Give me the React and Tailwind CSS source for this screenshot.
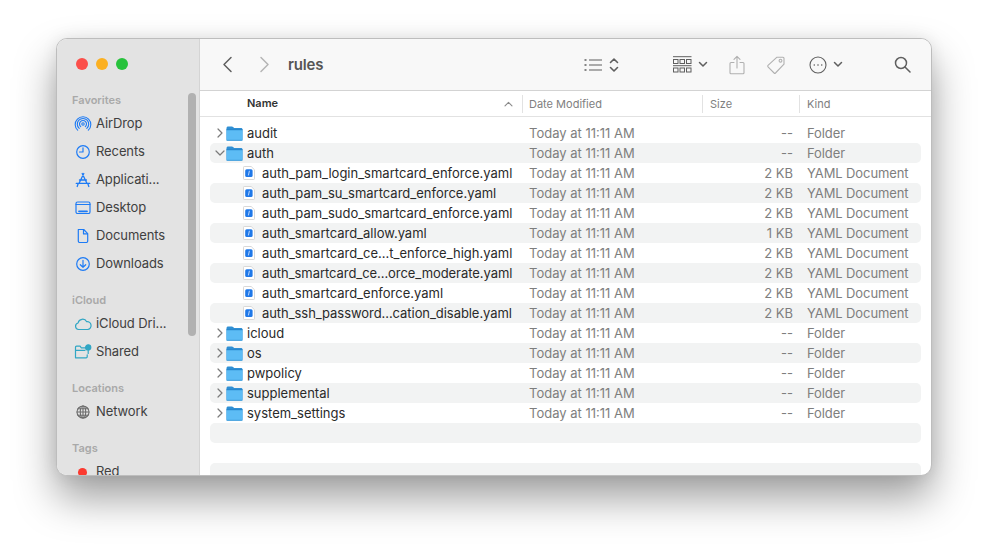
import React from "react";

const folderRows = (names) => names.map((n) => ({ name: n, type: "folder" }));
const rows = [
  { name: "audit", type: "folder" },
  { name: "auth", type: "folder", open: true },
  { name: "auth_pam_login_smartcard_enforce.yaml", size: "2 KB" },
  { name: "auth_pam_su_smartcard_enforce.yaml", size: "2 KB" },
  { name: "auth_pam_sudo_smartcard_enforce.yaml", size: "2 KB" },
  { name: "auth_smartcard_allow.yaml", size: "1 KB" },
  { name: "auth_smartcard_ce...t_enforce_high.yaml", size: "2 KB" },
  { name: "auth_smartcard_ce...orce_moderate.yaml", size: "2 KB", tight: true },
  { name: "auth_smartcard_enforce.yaml", size: "2 KB" },
  { name: "auth_ssh_password...cation_disable.yaml", size: "2 KB", tight: true },
  ...folderRows(["icloud", "os", "pwpolicy", "supplemental", "system_settings"]),
];

function S({ w = 18, h = 18, vb = "0 0 18 18", c = "#1d7bf5", sw = 1.2, children, className = "" }) {
  return (
    <svg width={w} height={h} viewBox={vb} fill="none" stroke={c} strokeWidth={sw} strokeLinecap="round" strokeLinejoin="round" className={className}>
      {children}
    </svg>
  );
}

const icons = {
  airdrop: (
    <S sw={1.1}>
      <circle cx="9" cy="9" r="1.2" />
      <path d="M6.7 11.6a3.5 3.5 0 1 1 4.600 0M5.200 13.400a5.700 5.700 0 1 1 7.600 0M3.700 15.200a7.800 7.800 0 1 1 10.600 0" />
    </S>
  ),
  recents: (
    <S>
      <circle cx="9" cy="9" r="6.3" />
      <path d="M9 4.800V9H5.500" />
    </S>
  ),
  apps: (
    <S sw={1.3}>
      <path d="M9.800 2.500 5.200 12M8.200 2.500 12.800 12M2.200 12.300h13.600M5.500 9h7M4.200 12.500l-1 3M13.800 12.500l1 3" />
    </S>
  ),
  desktop: (
    <S>
      <rect x="2" y="3" width="14" height="11.500" rx="1.600" />
      <path d="M2 5.500h14" />
      <path d="M5 12.300h8" strokeWidth="1.800" />
    </S>
  ),
  docs: (
    <S>
      <path d="M4.300 2.500h5.400l4 4.200v7.300a1.500 1.500 0 0 1-1.500 1.500H5.800A1.500 1.500 0 0 1 4.300 14z" />
      <path d="M9.500 2.700v4.200h4" />
    </S>
  ),
  downloads: (
    <S>
      <circle cx="9" cy="9" r="6.300" />
      <path d="M9 5.300v7M6.300 9.700 9 12.300l2.700-2.600" />
    </S>
  ),
  cloud: (
    <S c="#31a6c4">
      <path d="M4.600 14.500a3.300 3.300 0 0 1-.5-6.500 4.600 4.600 0 0 1 8.600-1.300 3.900 3.900 0 0 1 .9 7.800z" />
    </S>
  ),
  shared: (
    <S c="#31a6c4">
      <path d="M1.500 14.800V4.200a1 1 0 0 1 1-1h3.600l1.200 1.600h4M1.500 7.300h9.500M1.500 14.800h10.700a1 1 0 0 0 1-1v-2" />
      <circle cx="14.200" cy="4.400" r="2.600" fill="#31a6c4" />
      <path d="M14.200 7v3.500" />
    </S>
  ),
  network: (
    <S c="#6c6c6c" sw={1.1}>
      <circle cx="9" cy="9" r="6" />
      <ellipse cx="9" cy="9" rx="2.700" ry="6" />
      <path d="M3 9h12M4 5.800h10M4 12.200h10M9 3v12" />
    </S>
  ),
};

function Heading({ children, className = "" }) {
  return <div className={`h-4 pl-[15px] text-[11px] leading-4 font-semibold text-[#a9a9a9] ${className}`}>{children}</div>;
}

function Item({ icon, label, red }) {
  return (
    <div className="flex h-7 items-center pl-[16px]">
      <span className="flex w-[19px] shrink-0 items-center justify-center">
        {red ? <span className="block h-[9px] w-[9px] rounded-full bg-[#fb3a30]" /> : icons[icon]}
      </span>
      <span className="ml-[4px] text-[13px] tracking-[-0.1px] whitespace-nowrap text-[#404040]">{label}</span>
    </div>
  );
}

function Folder() {
  return (
    <svg width="17" height="15" viewBox="0 0 17 15" className="shrink-0">
      <path d="M.5 2.200C.5 1.200 1.200.5 2.200.5h3.600c.6 0 1 .2 1.400.6l.8.9h7c1 0 1.500.6 1.500 1.500v9.400c0 1-.6 1.600-1.500 1.600H2c-1 0-1.500-.6-1.500-1.600z" fill="#2f8fd4" />
      <rect x=".5" y="3.600" width="16" height="10.900" rx="1.100" fill="#5dbcf5" />
      <rect x=".5" y="3.200" width="16" height="1" fill="#2280c6" />
      <rect x=".5" y="13.800" width="16" height=".8" fill="#3d9ad8" />
    </svg>
  );
}

function FileIcon() {
  return (
    <svg width="12" height="14" viewBox="0 0 12 14" className="shrink-0">
      <path d="M.5 1.200C.5.8.8.5 1.200.5h7l3.300 3.300v9c0 .4-.3.7-.7.7H1.200c-.4 0-.7-.3-.7-.7z" fill="#fff" stroke="#d8d8d8" />
      <rect x="2.200" y="3.200" width="7.400" height="7.800" rx="1.500" fill="#1f78e8" />
      <path d="M6.400 4.800 5.400 9.400" stroke="#cfe2ff" strokeWidth=".9" fill="none" />
    </svg>
  );
}

function Chevron({ open }) {
  return (
    <svg width="10" height="10" viewBox="0 0 10 10" fill="none" stroke="#7a7a7a" strokeWidth="1.200" strokeLinecap="round" strokeLinejoin="round">
      <path d={open ? "M1 3l4 4 4-4" : "M3 1l4 4-4 4"} />
    </svg>
  );
}

function Row({ row, index }) {
  const shaded = index % 2 === 1;
  const isFolder = row.type === "folder";
  return (
    <div className={`grid h-5 grid-cols-[319px_174px_90px_1fr] items-center rounded-[5px] text-[13px] leading-5 ${shaded ? "bg-[#f2f3f3]" : ""}`}>
      <div className="flex items-center overflow-hidden">
        {isFolder ? (
          <>
            <span className="ml-[3px] flex w-[13px] justify-center"><Chevron open={row.open} /></span>
            <Folder />
            <span className="ml-[4px] whitespace-nowrap text-[#2a2a2a]">{row.name}</span>
          </>
        ) : (
          <>
            <span className="ml-[33px]"><FileIcon /></span>
            <span className={`ml-[7px] whitespace-nowrap text-[#2a2a2a] ${row.tight ? "tracking-[-0.06px]" : ""}`}>{row.name}</span>
          </>
        )}
      </div>
      <div className="whitespace-nowrap text-[#7e7e7e]">Today at 11:11 AM</div>
      <div className="text-right text-[#7e7e7e]">{isFolder ? "--" : row.size}</div>
      <div className="pl-[14px] tracking-[-0.1px] whitespace-nowrap text-[#7e7e7e]">{isFolder ? "Folder" : "YAML Document"}</div>
    </div>
  );
}

function Blank({ shaded }) {
  return <div className={`h-5 rounded-[5px] ${shaded ? "bg-[#f2f3f3]" : ""}`} />;
}

export default function App() {
  return (
    <div className="h-[550px] w-[987px] overflow-hidden bg-white pt-[38px] pl-[56px] font-['Inter','Liberation_Sans',sans-serif]">
      <div className="flex h-[438px] w-[876px] overflow-hidden rounded-[11px] border border-[#bdbdbd] bg-white shadow-[0_22px_42px_rgba(0,0,0,0.38),0_0_16px_rgba(0,0,0,0.08)]">
        <aside className="relative w-[143px] shrink-0 overflow-hidden border-r border-[#d4d4d4] bg-[#e3e3e3]">
          <div className="flex gap-[8px] pt-[19px] pl-[19px]">
            <span className="h-3 w-3 rounded-full bg-[#fb4f4a]" />
            <span className="h-3 w-3 rounded-full bg-[#fbb021]" />
            <span className="h-3 w-3 rounded-full bg-[#27c23c]" />
          </div>
          <Heading className="mt-[22px]">Favorites</Heading>
          <div className="mt-[2px]">
            <Item icon="airdrop" label="AirDrop" />
            <Item icon="recents" label="Recents" />
            <Item icon="apps" label="Applicati..." />
            <Item icon="desktop" label="Desktop" />
            <Item icon="docs" label="Documents" />
            <Item icon="downloads" label="Downloads" />
          </div>
          <Heading className="mt-[14px]">iCloud</Heading>
          <div className="mt-[2px]">
            <Item icon="cloud" label="iCloud Dri..." />
            <Item icon="shared" label="Shared" />
          </div>
          <Heading className="mt-[14px]">Locations</Heading>
          <div className="mt-[2px]">
            <Item icon="network" label="Network" />
          </div>
          <Heading className="mt-[14px]">Tags</Heading>
          <div className="mt-[2px]">
            <Item red label="Red" />
          </div>
          <div className="absolute top-[54px] left-[131px] h-[243px] w-2 rounded-full bg-[#b1b1b1]" />
        </aside>

        <div className="flex min-w-0 flex-1 flex-col">
          <div className="flex h-[52px] shrink-0 items-center border-b border-[#d3d3d3] bg-[#f8f8f8] text-[#666]">
            <svg width="11" height="17" viewBox="0 0 11 17" fill="none" stroke="#5f5f5f" strokeWidth="1.500" strokeLinecap="round" strokeLinejoin="round" className="ml-[22px]"><path d="M9 1.500 2 8.500l7 7" /></svg>
            <svg width="11" height="17" viewBox="0 0 11 17" fill="none" stroke="#b4b4b4" strokeWidth="1.500" strokeLinecap="round" strokeLinejoin="round" className="ml-[26px]"><path d="M2 1.500l7 7-7 7" /></svg>
            <span className="ml-[18px] text-[15px] leading-5 font-semibold tracking-[-0.2px] text-[#555]">rules</span>
            <svg width="18" height="14" viewBox="0 0 18 14" fill="none" stroke="#5f5f5f" strokeWidth="1.200" className="ml-[261px]">
              <path d="M5 2h13M5 7h13M5 12h13" />
              <path d="M.5 2h2M.5 7h2M.5 12h2" strokeWidth="1.600" />
            </svg>
            <svg width="10" height="16" viewBox="0 0 10 16" fill="none" stroke="#5f5f5f" strokeWidth="1.600" strokeLinecap="round" strokeLinejoin="round" className="ml-[7px]"><path d="M1.500 5.500 5 2l3.500 3.500M1.500 10.500 5 14l3.500-3.500" /></svg>
            <svg width="19" height="17" viewBox="0 0 19 17" fill="none" stroke="#5f5f5f" strokeWidth="1" className="ml-[54px]">
              <path d="M0 .7h18.500" />
              <rect x=".5" y="3.500" width="4.500" height="4" /><rect x="7" y="3.500" width="4.500" height="4" /><rect x="13.500" y="3.500" width="4.500" height="4" />
              <path d="M0 9.700h18.500" />
              <rect x=".5" y="12" width="4.500" height="4" /><rect x="7" y="12" width="4.500" height="4" /><rect x="13.500" y="12" width="4.500" height="4" />
            </svg>
            <svg width="10" height="7" viewBox="0 0 10 7" fill="none" stroke="#5f5f5f" strokeWidth="1.500" strokeLinecap="round" strokeLinejoin="round" className="ml-[6px]"><path d="M1.500 1.500 5 5l3.500-3.500" /></svg>
            <svg width="16" height="20" viewBox="0 0 16 20" fill="none" stroke="#b0b0b0" strokeWidth="1.100" strokeLinecap="round" strokeLinejoin="round" className="ml-[21px]">
              <path d="M5 7.500H2a1 1 0 0 0-1 1v9.200a1 1 0 0 0 1 1h12a1 1 0 0 0 1-1V8.500a1 1 0 0 0-1-1h-3M8 13V1.500M5 4.300 8 1.300l3 3" />
            </svg>
            <svg width="20" height="20" viewBox="0 0 20 20" fill="none" stroke="#b0b0b0" strokeWidth="1.100" strokeLinecap="round" strokeLinejoin="round" className="ml-[21px]">
              <path d="M11 2.200h6a1 1 0 0 1 1 1v6L9.500 18a1 1 0 0 1-1.400 0L2 11.800a1 1 0 0 1 0-1.400z" />
              <circle cx="14.500" cy="5.700" r="1.400" />
            </svg>
            <svg width="18" height="18" viewBox="0 0 18 18" fill="none" stroke="#5f5f5f" strokeWidth="1.100" className="ml-[23px]">
              <circle cx="9" cy="9" r="8" />
              <circle cx="5.300" cy="9" r=".8" fill="#5f5f5f" stroke="none" /><circle cx="9" cy="9" r=".8" fill="#5f5f5f" stroke="none" /><circle cx="12.700" cy="9" r=".8" fill="#5f5f5f" stroke="none" />
            </svg>
            <svg width="10" height="7" viewBox="0 0 10 7" fill="none" stroke="#5f5f5f" strokeWidth="1.500" strokeLinecap="round" strokeLinejoin="round" className="ml-[6px]"><path d="M1.500 1.500 5 5l3.500-3.500" /></svg>
            <svg width="17" height="17" viewBox="0 0 17 17" fill="none" stroke="#5f5f5f" strokeWidth="1.500" strokeLinecap="round" className="ml-[51px]">
              <circle cx="7" cy="7" r="5.500" /><path d="m11 11 5 5" />
            </svg>
          </div>

          <div className="flex h-[26px] shrink-0 items-center border-b border-[#e2e2e2] text-[11px] text-[#808080]">
            <div className="relative h-full w-[322px] pl-[47px] leading-[25px] font-semibold text-[#333]">
              Name
              <svg width="9" height="6" viewBox="0 0 9 6" fill="none" stroke="#8a8a8a" strokeWidth="1.100" strokeLinecap="round" strokeLinejoin="round" className="absolute top-[10px] left-[304px]"><path d="M1 4.800 4.500 1.300 8 4.800" /></svg>
            </div>
            <div className="h-[18px] w-[180px] border-l border-[#e2e2e2] pl-[6px] leading-[18px]">Date Modified</div>
            <div className="h-[18px] w-[97px] border-l border-[#e2e2e2] pl-[7px] leading-[18px]">Size</div>
            <div className="h-[18px] flex-1 border-l border-[#e2e2e2] pl-[7px] leading-[18px]">Kind</div>
          </div>

          <div className="flex-1 overflow-hidden pt-[6px] pr-[10px] pl-[10px]">
            {rows.map((r, i) => <Row key={r.name} row={r} index={i} />)}
            <Blank shaded />
            <Blank />
            <Blank shaded />
          </div>
        </div>
      </div>
    </div>
  );
}
